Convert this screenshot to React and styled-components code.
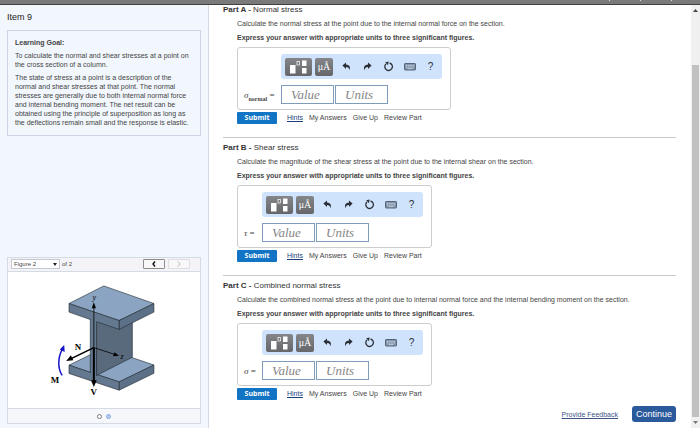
//STYLES
import { useState } from "react";
import styled, { createGlobalStyle } from "styled-components";

const parts = [
    {
        id: "A",
        title: "Normal stress",
        question: "Calculate the normal stress at the point due to the internal normal force on the section.",
        symbol: "σ",
        sub: "normal"
    },

    {
        id: "B",
        title: "Shear stress",
        question: "Calculate the magnitude of the shear stress at the point due to the internal shear on the section.",
        symbol: "τ"
    },

    {
        id: "C",
        title: "Combined normal stress",
        question: "Calculate the combined normal stress at the point due to internal normal force and the internal bending moment on the section.",
        symbol: "σ"
    }
];

function TemplateIcon () {
    return (
        <svg width="19" height="14" viewBox="0 0 19 14" fill="#FFFFFF" aria-hidden="true">
            <rect x="1" y="5" width="5.5" height="8.5" />
            <rect x="8" y="1.5" width="2.6" height="3.5" fill="none" stroke="#FFFFFF" strokeWidth="0.7" />
            <rect x="13" y="0.5" width="4.5" height="5.5" />
            <rect x="13" y="8" width="4.5" height="5.5" />
        </svg>
    )
}

function ArrowIcon ({ flip }) {
    return (
        <svg width="9" height="9" viewBox="0 0 9 9" aria-hidden="true">
            <g transform={flip ? "translate(9 0) scale(-1 1)" : undefined}>
                <path d="M0.4 3.6 L4 0.4 V2.4 C7.2 2.6 8.6 4.4 7.6 8.2 C7 5.8 6 5 4 4.9 V6.9 Z" fill="#2B3037" />
            </g>
        </svg>
    )
}

function ResetIcon () {
    return (
        <svg width="11" height="11" viewBox="0 0 11 11" aria-hidden="true">
            <path d="M6.6 2 A3.8 3.8 0 1 1 3 2.9" fill="none" stroke="#2B3037" strokeWidth="1.3" />
            <path d="M2.2 1.2 L5.6 0.6 L5 4.2 Z" fill="#2B3037" />
        </svg>
    )
}

function KeyboardIcon () {
    return (
        <svg width="12" height="8" viewBox="0 0 12 8" aria-hidden="true">
            <rect x="0.5" y="0.5" width="11" height="6.5" rx="0.6" fill="#8495AA" stroke="#56677B" />
            <path d="M2 2.5 H10 M2 4 H10" stroke="#D5E0EE" strokeWidth="0.8" strokeDasharray="1 0.8" />
            <path d="M3.5 5.6 H8.5" stroke="#D5E0EE" strokeWidth="0.7" />
        </svg>
    )
}

function BeamDrawing () {
    return (
        <Drawing viewBox="8 272 193 137" role="img" aria-label="Column cross section">
            <g stroke="#1E262E" strokeWidth="0.6" strokeLinejoin="round">
                {/* bottom flange */}
                <path d="M69.3 365.7 L104.3 348.5 L154.7 365.5 L119.7 382.5 Z" fill="#8AA4C2" />
                <path d="M119.7 382.5 L154.7 365.5 V373.8 L119.7 390.8 Z" fill="#5C7088" />
                <path d="M69.3 365.7 L119.7 382.5 V390.8 L69.3 374 Z" fill="#64788F" />

                {/* web */}
                <path d="M97 322 L133 318 V357.7 L97 376 Z" fill="#596A7C" />
                <path d="M90.7 318 H97 V376 L90.7 373 Z" fill="#64788F" />
                <path d="M91.2 372.2 L96.6 374.2 V378 L91.2 376 Z" fill="#64788F" stroke="none" />

                {/* top flange */}
                <path d="M69.3 303.7 L104.3 286 L154.7 303.7 L119.7 320.8 Z" fill="#8AA4C2" />
                <path d="M119.7 320.8 L154.7 303.7 V312.3 L119.7 329.7 Z" fill="#5C7088" />
                <path d="M69.3 303.7 L119.7 320.8 V329.7 L97 322 L90.7 319.8 L69.3 312.3 Z" fill="#64788F" />
                <path d="M91 318 H96.7 V324 H91 Z" fill="#64788F" stroke="none" />
            </g>

            {/* axes and forces */}
            <path d="M94.3 348 V305 M94.3 348 L117 355.4" stroke="#000000" strokeWidth="0.8" />
            <path d="M94.3 302.5 L96.4 308.5 H92.2 Z M119.6 356.3 L113.6 356.6 L115 352.6 Z" />
            <path d="M94.3 348 V383" stroke="#000000" strokeWidth="2" />
            <path d="M94.3 387.5 L91.4 380.8 H97.2 Z" />
            <path d="M94.3 348 L71 359.3" stroke="#000000" strokeWidth="1.6" />
            <path d="M66.5 361.5 L71.2 355.8 L73.6 360.8 Z" />
            <path d="M62.5 376 C57.8 369 58 358 62.4 350" fill="none" stroke="#1414C8" strokeWidth="1.5" />
            <path d="M64.5 345.5 L65 352.3 L60 350 Z" fill="#1414C8" />

            <AxisLabel x="93" y="300">y</AxisLabel>
            <AxisLabel x="121" y="359">z</AxisLabel>
            <ForceLabel x="75" y="350">N</ForceLabel>
            <ForceLabel x="51" y="384">M</ForceLabel>
            <ForceLabel x="91" y="396">V</ForceLabel>
        </Drawing>
    )
}

function Answer ({ part }) {
    const [value, setValue] = useState("");
    const [units, setUnits] = useState("");

    return (
        <AnswerBox $wide={Boolean(part.sub)}>
            <Toolbar>
                <DarkButton $wide type="button" aria-label="Templates"><TemplateIcon /></DarkButton>
                <DarkButton type="button" aria-label="Symbols">μÅ</DarkButton>
                <Tools>
                    <ToolButton type="button" aria-label="Undo"><ArrowIcon /></ToolButton>
                    <ToolButton type="button" aria-label="Redo"><ArrowIcon flip /></ToolButton>
                    <ToolButton type="button" aria-label="Reset"><ResetIcon /></ToolButton>
                    <ToolButton type="button" aria-label="Keyboard"><KeyboardIcon /></ToolButton>
                    <ToolButton type="button" aria-label="Help">?</ToolButton>
                </Tools>
            </Toolbar>
            <Symbol htmlFor={`value${part.id}`}>
                <i>{part.symbol}</i>{part.sub && <small>{part.sub}</small>} =
            </Symbol>
            <Fields>
                <Field
                    id={`value${part.id}`}
                    placeholder="Value"
                    value={value}
                    onChange={(e) => setValue(e.target.value)}
                />
                <Field
                    aria-label="Units"
                    placeholder="Units"
                    value={units}
                    onChange={(e) => setUnits(e.target.value)}
                />
            </Fields>
        </AnswerBox>
    )
}

function App () {
    const [figure, setFigure] = useState("2");

    return (
        <>
            <GlobalStyle />
            <Page>
                <TopBar>
                    <Divider />
                    <Divider />
                    <Divider />
                </TopBar>
                <Columns>
                    <Sidebar>
                        <ItemTitle>Item 9</ItemTitle>
                        <Goal>
                            <h2>Learning Goal:</h2>
                            <p>To calculate the normal and shear stresses at a point on the cross section of a column.</p>
                            <p>The state of stress at a point is a description of the normal and shear stresses at that point. The normal stresses are generally due to both internal normal force and internal bending moment. The net result can be obtained using the principle of superposition as long as the deflections remain small and the response is elastic.</p>
                        </Goal>
                        <Figure>
                            <FigureBar>
                                <SelectWrap>
                                    <select id="figure" value={figure} onChange={(e) => setFigure(e.target.value)}>
                                        <option value="1">Figure 1</option>
                                        <option value="2">Figure 2</option>
                                    </select>
                                    <svg width="4" height="3" viewBox="0 0 4 3" aria-hidden="true">
                                        <path d="M0 0 H4 L2 3 Z" fill="#222222" />
                                    </svg>
                                </SelectWrap>
                                <label htmlFor="figure">of 2</label>
                                <Pager>
                                    <PageButton type="button" aria-label="Previous figure" onClick={() => setFigure("1")}>
                                        <svg width="4" height="6" viewBox="0 0 4 6">
                                            <path d="M3 0.5 L1 3 L3 5.5" fill="none" stroke="currentColor" strokeWidth="1.4" />
                                        </svg>
                                    </PageButton>
                                    <PageButton type="button" aria-label="Next figure" disabled>
                                        <svg width="4" height="6" viewBox="0 0 4 6">
                                            <path d="M1 0.5 L3 3 L1 5.5" fill="none" stroke="currentColor" strokeWidth="1" />
                                        </svg>
                                    </PageButton>
                                </Pager>
                            </FigureBar>
                            <BeamDrawing />
                            <Dots>
                                <Dot type="button" aria-label="Figure 1" onClick={() => setFigure("1")} $active={figure === "1"} />
                                <Dot type="button" aria-label="Figure 2" onClick={() => setFigure("2")} $active={figure === "2"} />
                            </Dots>
                        </Figure>
                    </Sidebar>

                    <Main>
                        {parts.map( (part) =>
                            <Part key={part.id}>
                                <h2><b>Part {part.id} -</b> {part.title}</h2>
                                <PartBody>
                                    <p>{part.question}</p>
                                    <p><b>Express your answer with appropriate units to three significant figures.</b></p>
                                    <Answer part={part} />
                                    <Actions>
                                        <Submit type="button">Submit</Submit>
                                        <Action href="#hints" $hint>Hints</Action>
                                        <Action href="#answers">My Answers</Action>
                                        <Action href="#giveup">Give Up</Action>
                                        <Action href="#review">Review Part</Action>
                                    </Actions>
                                </PartBody>
                            </Part>
                        )}
                        <Footer>
                            <a href="#feedback">Provide Feedback</a>
                            <Continue type="button">Continue</Continue>
                        </Footer>
                    </Main>

                    <ScrollTrack aria-hidden="true">
                        <svg width="5" height="3" viewBox="0 0 5 3"><path d="M0 3 L2.5 0 L5 3 Z" fill="#444444" /></svg>
                        <ScrollThumb />
                        <svg width="5" height="3" viewBox="0 0 5 3"><path d="M0 0 L2.5 3 L5 0 Z" fill="#777777" /></svg>
                    </ScrollTrack>
                </Columns>
            </Page>
        </>
    )
}

const GlobalStyle = createGlobalStyle`
    * {
        box-sizing: border-box;
    }

    body {
        margin: 0;
        font-family: 'Liberation Sans', Arial, sans-serif;
        font-size: 7px;
        line-height: 9px;
        color: #444444;
        background-color: #FFFFFF;
    }

    h1, h2, p {
        margin: 0;
    }

    button, input, select {
        padding: 0;
        font: inherit;
    }

    svg {
        display: block;
    }
`

const Page = styled.div`
    min-height: 100vh;
    display: flex;
    flex-direction: column;
`

const TopBar = styled.header`
    height: 5px;
    padding-right: 28px;
    display: flex;
    flex-shrink: 0;
    justify-content: flex-end;
    gap: 30px;
    background-color: #7A7A7A;
    border-bottom: 1px solid #3F3F3F;
`

const Divider = styled.span`
    width: 1px;
    height: 1px;
    background-color: #E4E4E4;
`

const Columns = styled.div`
    flex: 1;
    display: flex;
`

const Sidebar = styled.aside`
    width: 29%;
    min-width: 209px;
    max-width: 260px;
    padding: 7px 7px 4px;
    display: flex;
    flex-direction: column;
    background-color: #F2F7FD;
    border-right: 1px solid #D3D9E6;
`

const ItemTitle = styled.h1`
    margin-bottom: 8px;
    font-size: 9px;
    line-height: 10px;
    font-weight: 400;
    color: #222222;
`

const Goal = styled.section`
    padding: 7px 7px 8px;
    border: 1px solid #CBD5E6;

    h2 {
        font-size: 7px;
    }

    p {
        margin-top: 4px;
    }
`

const Figure = styled.section`
    margin-top: auto;
    background-color: #FFFFFF;
    border: 1px solid #D5DBE5;
`

const FigureBar = styled.div`
    height: 14px;
    padding: 0 10px 0 3px;
    display: flex;
    align-items: center;
    gap: 2px;
    font-size: 6px;
    background-color: #F4F4F8;
    border-bottom: 1px solid #D5DBE5;
`

const SelectWrap = styled.div`
    position: relative;

    select {
        display: block;
        width: 49px;
        height: 10px;
        padding-left: 2px;
        appearance: none;
        color: #444444;
        background-color: #FFFFFF;
        border: 1px solid #C6C9D0;
        border-radius: 0;
    }

    svg {
        position: absolute;
        top: 4px;
        right: 3px;
        pointer-events: none;
    }
`

const Pager = styled.div`
    margin-left: auto;
    display: flex;
    gap: 3px;
`

const PageButton = styled.button`
    width: 22px;
    height: 10px;
    display: flex;
    align-items: center;
    justify-content: center;
    color: #111111;
    background-color: #F8F8F8;
    border: 1px solid #8C8C8C;
    border-radius: 1px;

    &:disabled {
        color: #B5B5B5;
        border-color: #DDDDE2;
    }
`

const Drawing = styled.svg`
    width: 100%;
    height: auto;
`

const AxisLabel = styled.text`
    font: italic 8px 'Liberation Serif', serif;
`

const ForceLabel = styled.text`
    font: bold 9px 'Liberation Serif', serif;
`

const Dots = styled.div`
    height: 15px;
    display: flex;
    align-items: center;
    justify-content: center;
    gap: 4px;
    background-color: #F6F7FB;
    border-top: 1px solid #D5DBE5;
`

const Dot = styled.button`
    width: 5px;
    height: 5px;
    border: 1px solid ${({ $active }) => $active ? "#8BA9DA" : "#777777"};
    border-radius: 50%;
    background-color: ${({ $active }) => $active ? "#B4CBF0" : "#FFFFFF"};
`

const Main = styled.main`
    flex: 1;
    min-width: 0;
    padding: 0 15px 0 14px;
`

const Part = styled.section`
    padding: 5px 0 13px;
    border-top: 1px solid #C9C9C9;

    &:first-child {
        padding-top: 0;
        border-top: 0;
    }

    &:nth-child(3) {
        padding-bottom: 0;
    }

    h2 {
        font-size: 8px;
        line-height: 10px;
        font-weight: 400;
        color: #333333;
    }
`

const PartBody = styled.div`
    padding-left: 14px;
    line-height: 10px;

    p {
        margin-top: 4px;
    }
`

const AnswerBox = styled.div`
    width: fit-content;
    margin-top: 4px;
    padding: 6px 8px 5px 6px;
    display: grid;
    grid-template-columns: ${({ $wide }) => $wide ? "37px" : "18px"} auto;
    row-gap: 6px;
    align-items: center;
    border: 1px solid #CDCDCD;
    border-radius: 3px;
`

const Toolbar = styled.div`
    grid-column: 2;
    height: 25px;
    padding: 0 1px 0 4px;
    display: flex;
    align-items: center;
    gap: 3px;
    background-color: #CFE3FC;
    border-radius: 3px;
`

const DarkButton = styled.button`
    width: ${({ $wide }) => $wide ? "27px" : "18px"};
    height: 18px;
    display: flex;
    align-items: center;
    justify-content: center;
    font-family: 'Liberation Serif', serif;
    font-size: 10px;
    color: #FFFFFF;
    background: linear-gradient(#85868A, #65666A);
    border: 0;
    border-radius: 2px;
`

const Tools = styled.div`
    display: flex;
`

const ToolButton = styled.button`
    width: 21px;
    height: 18px;
    display: flex;
    align-items: center;
    justify-content: center;
    font-size: 10px;
    color: #2B3037;
    background: none;
    border: 0;
`

const Symbol = styled.label`
    font-family: 'Liberation Serif', serif;
    font-size: 9px;
    white-space: nowrap;

    small {
        font-size: 6px;
        font-weight: 700;
        vertical-align: sub;
        line-height: 1px;
    }
`

const Fields = styled.div`
    display: flex;
    gap: 1px;
`

const Field = styled.input`
    width: 53px;
    height: 19px;
    padding-left: 9px;
    font-family: 'Liberation Serif', serif;
    font-size: 13px;
    font-style: italic;
    color: #333333;
    background-color: #FFFFFF;
    border: 1px solid #7F9DBB;
    border-radius: 0;

    &::placeholder {
        color: #858585;
    }
`

const Actions = styled.div`
    margin-top: 2px;
    display: flex;
    align-items: center;
    gap: 6px;
`

const Submit = styled.button`
    width: 40px;
    height: 12px;
    margin-right: 4px;
    font-family: 'Open Sans', sans-serif;
    font-weight: 700;
    color: #FFFFFF;
    background-color: #1274C4;
    border: 0;
    border-radius: 1px;
`

const Action = styled.a`
    color: ${({ $hint }) => $hint ? "#1C3F7C" : "#444444"};
    text-decoration: ${({ $hint }) => $hint ? "underline" : "none"};
`

const Footer = styled.footer`
    padding: 6px 0 5px;
    display: flex;
    align-items: center;
    justify-content: flex-end;
    gap: 14px;

    a {
        color: #3B5484;
    }
`

const Continue = styled.button`
    width: 44px;
    height: 16px;
    font-size: 9px;
    color: #FFFFFF;
    background-color: #2A5A9B;
    border: 0;
    border-radius: 3px;
`

const ScrollTrack = styled.div`
    width: 9px;
    padding: 4px 0;
    display: flex;
    flex-direction: column;
    align-items: center;
    background-color: #F0F0F0;
`

const ScrollThumb = styled.div`
    width: 7px;
    margin: 53px 0 4px;
    flex: 1;
    background-color: #C1C1C1;
`

export default App
